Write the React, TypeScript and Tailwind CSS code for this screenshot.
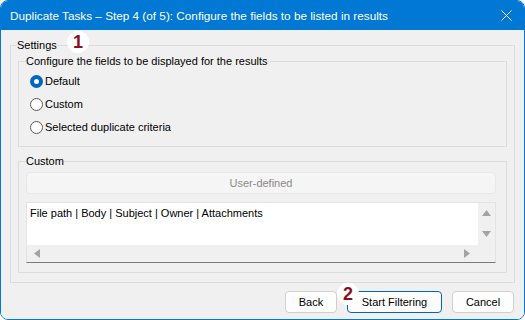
import React from "react"

const font = { fontFamily: '"Segoe UI", "Liberation Sans", Arial, sans-serif' }

function Badge({ n }: { n: string }) {
  return (
    <div className="absolute w-[22px] h-[22px] rounded-full bg-white flex items-center justify-center text-[#8b0f1f] text-[18px] font-bold leading-none">
      {n}
    </div>
  )
}

function Radio({ label, checked }: { label: string; checked?: boolean }) {
  return (
    <div className="h-[23px] flex items-center gap-[2px] pl-[4px]">
      {checked ? (
        <span className="w-[13px] h-[13px] rounded-full bg-[#0067c0] flex items-center justify-center">
          <span className="w-[5px] h-[5px] rounded-full bg-white" />
        </span>
      ) : (
        <span className="w-[13px] h-[13px] rounded-full border border-[#5a5a5a] bg-white" />
      )}
      <span>{label}</span>
    </div>
  )
}

function Tri({ dir }: { dir: "up" | "down" | "left" | "right" }) {
  const pts = {
    up: "0,7 4.5,1 9,7",
    down: "0,1 4.5,7 9,1",
    left: "7,0 1,4.5 7,9",
    right: "1,0 7,4.5 1,9",
  }[dir]
  return (
    <svg width="9" height="9" viewBox="0 0 9 9">
      <polygon points={pts} fill="#a3a3a3" />
    </svg>
  )
}

export default function App() {
  return (
    <div className="w-[525px] h-[320px] bg-white text-[11px] text-black" style={font}>
      <div className="h-full flex flex-col rounded-t-[8px] rounded-b-[8px] border border-[#0078d4] overflow-hidden">
        {/* Title bar */}
        <div className="h-[29px] bg-[#0078d4] text-white text-[11.75px] flex items-center justify-between pl-[9px] pr-[12px]">
          <span>Duplicate Tasks – Step 4 (of 5): Configure the fields to be listed in results</span>
          <svg width="11" height="11" viewBox="0 0 11 11">
            <path d="M0.5 0.5L10.5 10.5M10.5 0.5L0.5 10.5" stroke="white" strokeWidth="1" />
          </svg>
        </div>

        {/* Body */}
        <div className="flex-1 bg-[#f0f0f0] flex flex-col pt-[8px] px-[9px]">
          <div className="relative">
            <fieldset className="border border-[#dcdcdc] px-[7px] pb-[9px]">
              <legend className="leading-[14px] -ml-px">Settings</legend>

              <fieldset className="mt-[2px] border border-[#dcdcdc] pl-[7px] pb-[7px]">
                <legend className="leading-[14px]">Configure the fields to be displayed for the results</legend>
                <div className="pt-[2px]">
                  <Radio label="Default" checked />
                  <Radio label="Custom" />
                  <Radio label="Selected duplicate criteria" />
                </div>
              </fieldset>

              <fieldset className="mt-[7px] border border-[#dcdcdc] pl-[7px] pr-[10px] pb-[9px]">
                <legend className="leading-[14px]">Custom</legend>
                <div className="pt-[4px] flex flex-col gap-[8px]">
                  <div className="h-[22px] rounded-[4px] bg-[#f5f5f5] border border-[#e8e8e8] flex items-center justify-center text-[#8a8a8a]">
                    User-defined
                  </div>
                  <div className="h-[61px] border border-[#e3e3e3] border-b-[#7a7a7a] bg-[#f0f0f0] flex flex-col">
                    <div className="flex flex-1">
                      <div className="flex-1 bg-white pl-[3px] pt-[2px] leading-[16px]">
                        File path | Body | Subject | Owner | Attachments
                      </div>
                      <div className="w-[17px] flex flex-col items-center justify-between py-[6px]">
                        <Tri dir="up" />
                        <Tri dir="down" />
                      </div>
                    </div>
                    <div className="h-[17px] flex items-center justify-between pl-[6px] pr-[23px]">
                      <Tri dir="left" />
                      <Tri dir="right" />
                    </div>
                  </div>
                </div>
              </fieldset>
            </fieldset>
            <div className="absolute left-[57px] top-[-7px]">
              <Badge n="1" />
            </div>
          </div>

          {/* Buttons */}
          <div className="relative flex justify-end gap-[10px] mt-[8px] pr-px">
            <button className="w-[52px] h-[22px] rounded-[4px] bg-[#fdfdfd] border border-[#d0d0d0]">Back</button>
            <button className="w-[95px] h-[22px] rounded-[4px] bg-[#fdfdfd] border border-[#0067c0]">Start Filtering</button>
            <button className="w-[62px] h-[22px] rounded-[4px] bg-[#fdfdfd] border border-[#d0d0d0]">Cancel</button>
            <div className="absolute left-[327px] top-[-8px]">
              <Badge n="2" />
            </div>
          </div>
        </div>
      </div>
    </div>
  )
}
